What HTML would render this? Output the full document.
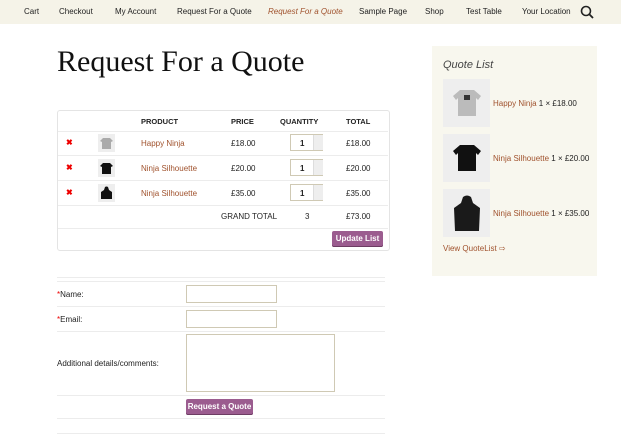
<!DOCTYPE html><html><head><style>
body{margin:0;width:621px;height:443px;background:#fff;font-family:"Liberation Sans",sans-serif;font-size:8px;color:#222;position:relative;overflow:hidden}
.a{position:absolute;white-space:nowrap}
.nav{position:absolute;left:0;top:0;width:621px;height:24px;background:#f5f3e8}
.l{color:#a0522d}
.hl{position:absolute;height:1px;background:#ececec}
.inp{position:absolute;border:1px solid #cfc9b4;background:#fff;box-sizing:border-box}
.btn{position:absolute;background:#9b5c8f;color:#fff;font-weight:bold;font-size:8px;text-align:center;border-radius:2px;box-shadow:inset 0 -1px 0 #6d3d63}
.th{font-weight:bold;font-size:7.5px}
.img{position:absolute;background:#eee}
</style></head><body>
<div class="nav"></div>
<div class="a" style="top:7px;left:24px">Cart</div>
<div class="a" style="top:7px;left:59px">Checkout</div>
<div class="a" style="top:7px;left:115px">My Account</div>
<div class="a" style="top:7px;left:177px">Request For a Quote</div>
<div class="a l" style="top:7px;left:268px;font-style:italic">Request For a Quote</div>
<div class="a" style="top:7px;left:359px">Sample Page</div>
<div class="a" style="top:7px;left:425px">Shop</div>
<div class="a" style="top:7px;left:466px">Test Table</div>
<div class="a" style="top:7px;left:522px">Your Location</div>
<svg class="a" style="left:580px;top:5px" width="14" height="14"><circle cx="6" cy="6" r="4.5" fill="none" stroke="#222" stroke-width="1.6"/><line x1="9.3" y1="9.3" x2="13" y2="13" stroke="#222" stroke-width="1.8"/></svg>
<div class="a" style="left:57px;top:45px;font-family:'Liberation Serif',serif;font-size:30px;color:#111">Request For a Quote</div>

<div class="a" style="left:432px;top:46px;width:165px;height:230px;background:#f8f7ee"></div>
<div class="a" style="left:443px;top:59px;font-size:11px;font-style:italic;color:#444">Quote List</div>
<div class="img" style="left:443px;top:79px;width:47px;height:48px"></div>
<svg class="a" style="left:452px;top:88px" width="30" height="30"><path d="M8 2 L22 2 L29 8 L26 12 L24 10 L24 28 L6 28 L6 10 L4 12 L1 8Z" fill="#bbb"/><rect x="12" y="7" width="6" height="5" fill="#333"/></svg>
<div class="a" style="left:493px;top:99px"><span class="l">Happy Ninja</span> 1 × £18.00</div>
<div class="img" style="left:443px;top:134px;width:47px;height:48px"></div>
<svg class="a" style="left:452px;top:143px" width="30" height="30"><path d="M8 2 L22 2 L29 8 L26 12 L24 10 L24 28 L6 28 L6 10 L4 12 L1 8Z" fill="#111"/></svg>
<div class="a" style="left:493px;top:154px"><span class="l">Ninja Silhouette</span> 1 × £20.00</div>
<div class="img" style="left:443px;top:189px;width:47px;height:48px"></div>
<svg class="a" style="left:452px;top:195px" width="30" height="38"><path d="M11 2 Q15 -1 19 2 L21 8 L28 13 L27 36 L3 36 L2 13 L9 8Z" fill="#1a1a1a"/></svg>
<div class="a" style="left:493px;top:209px"><span class="l">Ninja Silhouette</span> 1 × £35.00</div>
<div class="a l" style="left:443px;top:244px">View QuoteList ⇨</div>

<div class="a" style="left:57px;top:110px;width:331px;height:139px;border:1px solid #e4e4e4;border-radius:3px"></div>
<div class="a th" style="left:141px;top:117px">PRODUCT</div>
<div class="a th" style="left:231px;top:117px">PRICE</div>
<div class="a th" style="left:280px;top:117px">QUANTITY</div>
<div class="a th" style="left:346px;top:117px">TOTAL</div>
<div class="hl" style="left:58px;width:330px;top:131px"></div>
<div class="hl" style="left:58px;width:330px;top:155px"></div>
<div class="hl" style="left:58px;width:330px;top:180px"></div>
<div class="hl" style="left:58px;width:330px;top:205px"></div>
<div class="hl" style="left:58px;width:330px;top:228px"></div>

<div class="a" style="left:66px;top:138px;color:#e00;font-weight:bold">✖</div>
<div class="img" style="left:98px;top:134px;width:17px;height:18px"></div>
<svg class="a" style="left:100px;top:137px" width="13" height="13"><path d="M3 1 L10 1 L13 4 L11 5 L11 12 L2 12 L2 5 L0 4Z" fill="#aaa"/></svg>
<div class="a l" style="left:141px;top:139px">Happy Ninja</div>
<div class="a" style="left:231px;top:139px">£18.00</div>
<div class="inp" style="left:290px;top:134px;width:33px;height:17px"></div><div class="a" style="left:300px;top:139px;font-weight:bold">1</div><div class="a" style="left:313px;top:135px;width:9px;height:15px;background:#eee;border-left:1px solid #ddd"></div>
<div class="a" style="left:346px;top:139px">£18.00</div>

<div class="a" style="left:66px;top:163px;color:#e00;font-weight:bold">✖</div>
<div class="img" style="left:98px;top:159px;width:17px;height:18px"></div>
<svg class="a" style="left:100px;top:162px" width="13" height="13"><path d="M3 1 L10 1 L13 4 L11 5 L11 12 L2 12 L2 5 L0 4Z" fill="#111"/></svg>
<div class="a l" style="left:141px;top:164px">Ninja Silhouette</div>
<div class="a" style="left:231px;top:164px">£20.00</div>
<div class="inp" style="left:290px;top:159px;width:33px;height:17px"></div><div class="a" style="left:300px;top:164px;font-weight:bold">1</div><div class="a" style="left:313px;top:160px;width:9px;height:15px;background:#eee;border-left:1px solid #ddd"></div>
<div class="a" style="left:346px;top:164px">£20.00</div>

<div class="a" style="left:66px;top:188px;color:#e00;font-weight:bold">✖</div>
<div class="img" style="left:98px;top:184px;width:17px;height:18px"></div>
<svg class="a" style="left:100px;top:186px" width="13" height="14"><path d="M5 1 Q6.5 0 8 1 L9 4 L12 6 L12 13 L1 13 L1 6 L4 4Z" fill="#111"/></svg>
<div class="a l" style="left:141px;top:189px">Ninja Silhouette</div>
<div class="a" style="left:231px;top:189px">£35.00</div>
<div class="inp" style="left:290px;top:184px;width:33px;height:17px"></div><div class="a" style="left:300px;top:189px;font-weight:bold">1</div><div class="a" style="left:313px;top:185px;width:9px;height:15px;background:#eee;border-left:1px solid #ddd"></div>
<div class="a" style="left:346px;top:189px">£35.00</div>

<div class="a" style="left:221px;top:212px">GRAND TOTAL</div>
<div class="a" style="left:305px;top:212px">3</div>
<div class="a" style="left:346px;top:212px">£73.00</div>
<div class="btn" style="left:332px;top:231px;width:51px;height:16px;line-height:16px">Update List</div>

<div class="hl" style="left:57px;width:328px;top:277px"></div>
<div class="hl" style="left:57px;width:328px;top:281px"></div>
<div class="hl" style="left:57px;width:328px;top:306px"></div>
<div class="hl" style="left:57px;width:328px;top:331px"></div>
<div class="hl" style="left:57px;width:328px;top:395px"></div>
<div class="hl" style="left:57px;width:328px;top:418px"></div>
<div class="hl" style="left:57px;width:328px;top:433px"></div>
<div class="a" style="left:57px;top:290px"><span style="color:#e00">*</span>Name:</div>
<div class="inp" style="left:186px;top:285px;width:91px;height:18px"></div>
<div class="a" style="left:57px;top:315px"><span style="color:#e00">*</span>Email:</div>
<div class="inp" style="left:186px;top:310px;width:91px;height:18px"></div>
<div class="a" style="left:57px;top:359px">Additional details/comments:</div>
<div class="inp" style="left:186px;top:334px;width:149px;height:58px"></div>
<div class="btn" style="left:186px;top:399px;width:67px;height:16px;line-height:16px">Request a Quote</div>
</body></html>
